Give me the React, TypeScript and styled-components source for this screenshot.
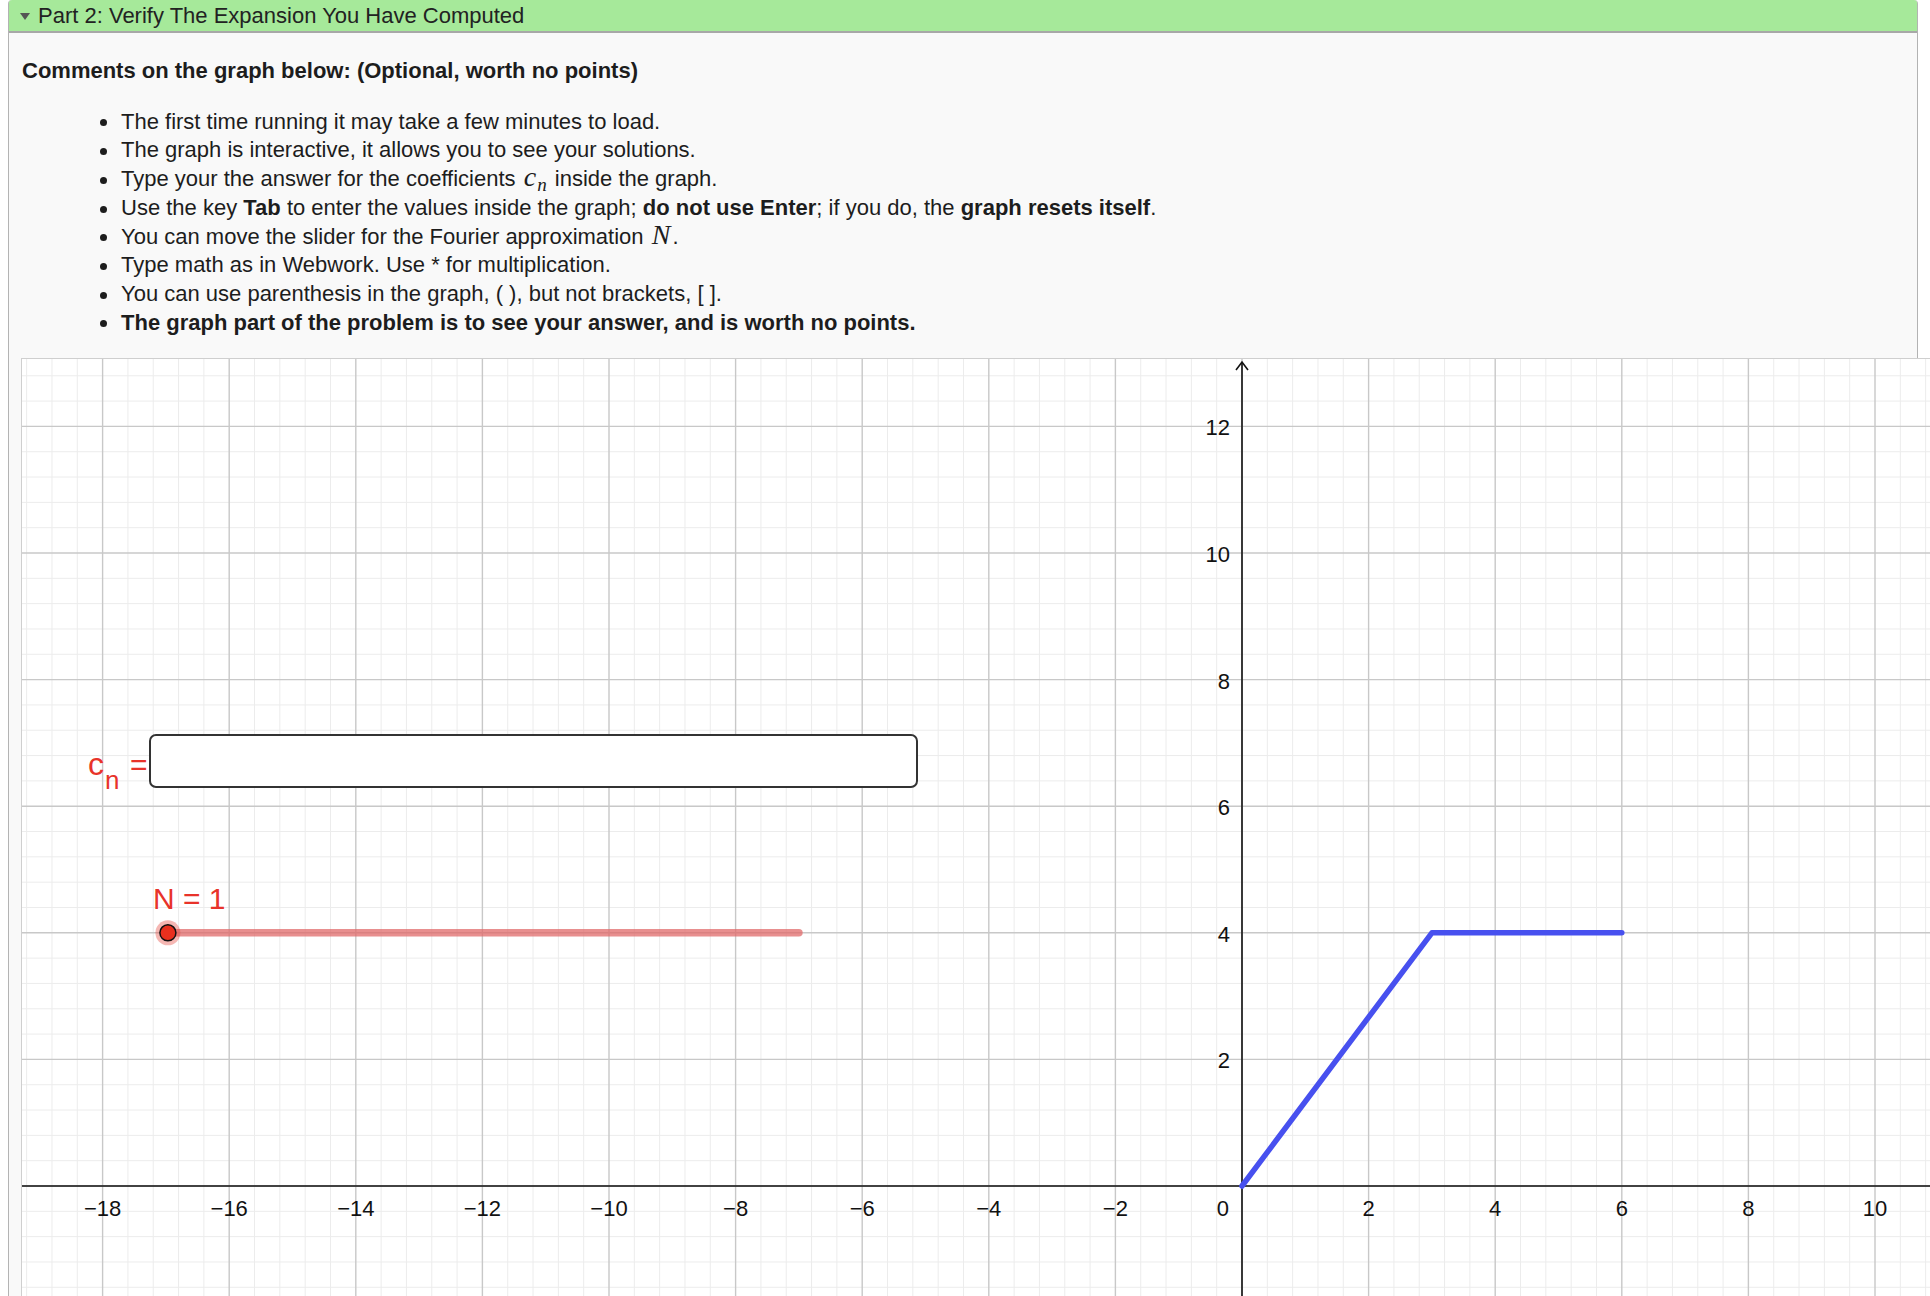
import React from "react";
import styled, { createGlobalStyle } from "styled-components";

const GlobalStyle = createGlobalStyle`
  html, body {
    margin: 0;
    padding: 0;
    overflow: hidden;
    background: #ffffff;
  }
  body {
    font-family: "Liberation Sans", Arial, Helvetica, sans-serif;
    color: #1d1d1d;
  }
`;

///Styled Comps

const Page = styled.div`
  width: 1930px;
  height: 1296px;
  padding-left: 8px;
  box-sizing: border-box;
  overflow: hidden;
`;

const Section = styled.section`
  width: 1910px;
  box-sizing: border-box;
  border-left: 1px solid #b3b3b3;
  border-right: 1px solid #b3b3b3;
  border-radius: 4px 4px 0 0;
  background: #f9f9f9;
`;

const Header = styled.div`
  height: 31px;
  display: flex;
  align-items: center;
  gap: 8px;
  padding-left: 11px;
  background: #a6e99a;
  border-bottom: 2px solid #a8a8a8;
  border-radius: 3px 3px 0 0;
  font-size: 22px;
  line-height: 31px;
  color: #222;
`;

const Caret = styled.span`
  width: 0;
  height: 0;
  border-left: 5px solid transparent;
  border-right: 5px solid transparent;
  border-top: 7px solid #555;
  margin-top: 1px;
`;

const Body = styled.div`
  padding: 24px 0 0 13px;
  font-size: 22px;
  line-height: 28.7px;
`;

const Heading = styled.div`
  font-weight: bold;
`;

const List = styled.ul`
  margin: 22px 0 0 0;
  padding-left: 99px;
  list-style: none;
`;

const Item = styled.li<{ $bold?: boolean }>`
  font-weight: ${(p) => (p.$bold ? "bold" : "normal")};
  &::before {
    content: "";
    display: inline-block;
    width: 7px;
    height: 7px;
    border-radius: 50%;
    background: #1d1d1d;
    margin-left: -21px;
    margin-right: 14px;
    vertical-align: middle;
  }
`;

const MathVar = styled.span`
  font-family: "Liberation Serif", "Times New Roman", serif;
  font-style: italic;
  font-size: 28px;
  line-height: 0;
  margin: 0 2px;
  sub {
    font-size: 19px;
    vertical-align: -5px;
    line-height: 0;
    margin-left: 1px;
  }
`;

const GraphFrame = styled.div`
  position: relative;
  margin: 21px 0 0 12px;
  width: 1909px;
  height: 940px;
  background: #ffffff;
  border-top: 1px solid #cfcfcf;
  border-left: 1px solid #cfcfcf;
`;

const Plot = styled.svg`
  display: block;
  font-family: "Liberation Sans", Arial, Helvetica, sans-serif;
`;

const CoefInput = styled.input`
  position: absolute;
  left: 127px;
  top: 375px;
  width: 769px;
  height: 54px;
  box-sizing: border-box;
  border: 2px solid #333;
  border-radius: 7px;
  background: #ffffff;
  outline: none;
  padding: 0 10px;
  font-size: 22px;
  font-family: "Liberation Sans", Arial, sans-serif;
`;

///////

// graph geometry (svg px)
const W = 1909;
const H = 940;
const ox = 1220;
const oy = 827;
const u = 63.3;

const px = (x: number) => ox + x * u;
const py = (y: number) => oy - y * u;

const range = (a: number, b: number) => {
  const out: number[] = [];
  for (let i = a; i <= b; i++) out.push(i);
  return out;
};

const label = (n: number) => (n < 0 ? "\u2212" + -n : String(n));

const Graph: React.FC = () => {
  const minorX = range(-50, 28).filter((k) => k % 5 !== 0);
  const minorY = range(-6, 34).filter((k) => k % 5 !== 0);
  const majorX = range(-10, 6).map((k) => k * 2);
  const majorY = range(-1, 7).map((k) => k * 2);
  const xLabels = range(-9, 5).map((k) => k * 2).filter((k) => k !== 0);
  const yLabels = [2, 4, 6, 8, 10, 12];

  return (
    <Plot width={W} height={H} viewBox={`0 0 ${W} ${H}`}>
      {/* minor grid */}
      {minorX.map((k) => (
        <line key={"mx" + k} x1={px(k * 0.4)} x2={px(k * 0.4)} y1={0} y2={H} stroke="#ececec" strokeWidth={1} />
      ))}
      {minorY.map((k) => (
        <line key={"my" + k} x1={0} x2={W} y1={py(k * 0.4)} y2={py(k * 0.4)} stroke="#ececec" strokeWidth={1} />
      ))}
      {/* major grid */}
      {majorX.map((k) => (
        <line key={"Mx" + k} x1={px(k)} x2={px(k)} y1={0} y2={H} stroke="#c8c8c8" strokeWidth={1.4} />
      ))}
      {majorY.map((k) => (
        <line key={"My" + k} x1={0} x2={W} y1={py(k)} y2={py(k)} stroke="#c8c8c8" strokeWidth={1.4} />
      ))}

      {/* axes */}
      <line x1={0} x2={W} y1={oy} y2={oy} stroke="#111" strokeWidth={1.6} />
      <line x1={ox} x2={ox} y1={3} y2={H} stroke="#111" strokeWidth={1.6} />
      <polyline
        points={`${ox - 6},${11} ${ox},${3} ${ox + 6},${11}`}
        fill="none"
        stroke="#111"
        strokeWidth={1.6}
      />

      {/* axis labels */}
      {xLabels.map((k) => (
        <text key={"xl" + k} x={px(k)} y={857} fontSize={22} textAnchor="middle" fill="#111">
          {label(k)}
        </text>
      ))}
      <text x={ox - 13} y={857} fontSize={22} textAnchor="end" fill="#111">
        0
      </text>
      {yLabels.map((k) => (
        <text key={"yl" + k} x={ox - 12} y={py(k) + 9} fontSize={22} textAnchor="end" fill="#111">
          {k}
        </text>
      ))}

      {/* function */}
      <polyline
        points={`${px(0)},${py(0)} ${px(3)},${py(4)} ${px(6)},${py(4)}`}
        fill="none"
        stroke="#4750ef"
        strokeWidth={5.5}
        strokeLinecap="round"
        strokeLinejoin="round"
      />

      {/* slider N */}
      <line
        x1={px(-17)}
        x2={px(-7)}
        y1={py(4)}
        y2={py(4)}
        stroke="#e06a6a"
        strokeOpacity={0.75}
        strokeWidth={7.5}
        strokeLinecap="round"
      />
      <circle cx={px(-17) + 2} cy={py(4)} r={12.5} fill="#e64a40" fillOpacity={0.4} />
      <circle cx={px(-17) + 2} cy={py(4)} r={8} fill="#e8301e" stroke="#111" strokeWidth={1.5} />
      <text x={131} y={550} fontSize={30} fill="#e8332a">
        N = 1
      </text>

      {/* c_n label */}
      <text x={66} y={416} fontSize={32} fill="#e8332a">
        c
      </text>
      <text x={83} y={430} fontSize={26} fill="#e8332a">
        n
      </text>
      <text x={108} y={416} fontSize={30} fill="#e8332a">
        =
      </text>
    </Plot>
  );
};

const App: React.FC = () => {
  return (
    <Page>
      <GlobalStyle />
      <Section>
        <Header>
          <Caret />
          <span>Part 2: Verify The Expansion You Have Computed</span>
        </Header>
        <Body>
          <Heading>Comments on the graph below: (Optional, worth no points)</Heading>
          <List>
            <Item>The first time running it may take a few minutes to load.</Item>
            <Item>The graph is interactive, it allows you to see your solutions.</Item>
            <Item>
              Type your the answer for the coefficients{" "}
              <MathVar>
                c<sub>n</sub>
              </MathVar>{" "}
              inside the graph.
            </Item>
            <Item>
              Use the key <b>Tab</b> to enter the values inside the graph; <b>do not use Enter</b>; if you do, the{" "}
              <b>graph resets itself</b>.
            </Item>
            <Item>
              You can move the slider for the Fourier approximation <MathVar>N</MathVar>.
            </Item>
            <Item>Type math as in Webwork. Use * for multiplication.</Item>
            <Item>You can use parenthesis in the graph, ( ), but not brackets, [ ].</Item>
            <Item $bold>The graph part of the problem is to see your answer, and is worth no points.</Item>
          </List>
        </Body>
        <GraphFrame>
          <Graph />
          <CoefInput type="text" aria-label="c_n" />
        </GraphFrame>
      </Section>
    </Page>
  );
};

export default App;
